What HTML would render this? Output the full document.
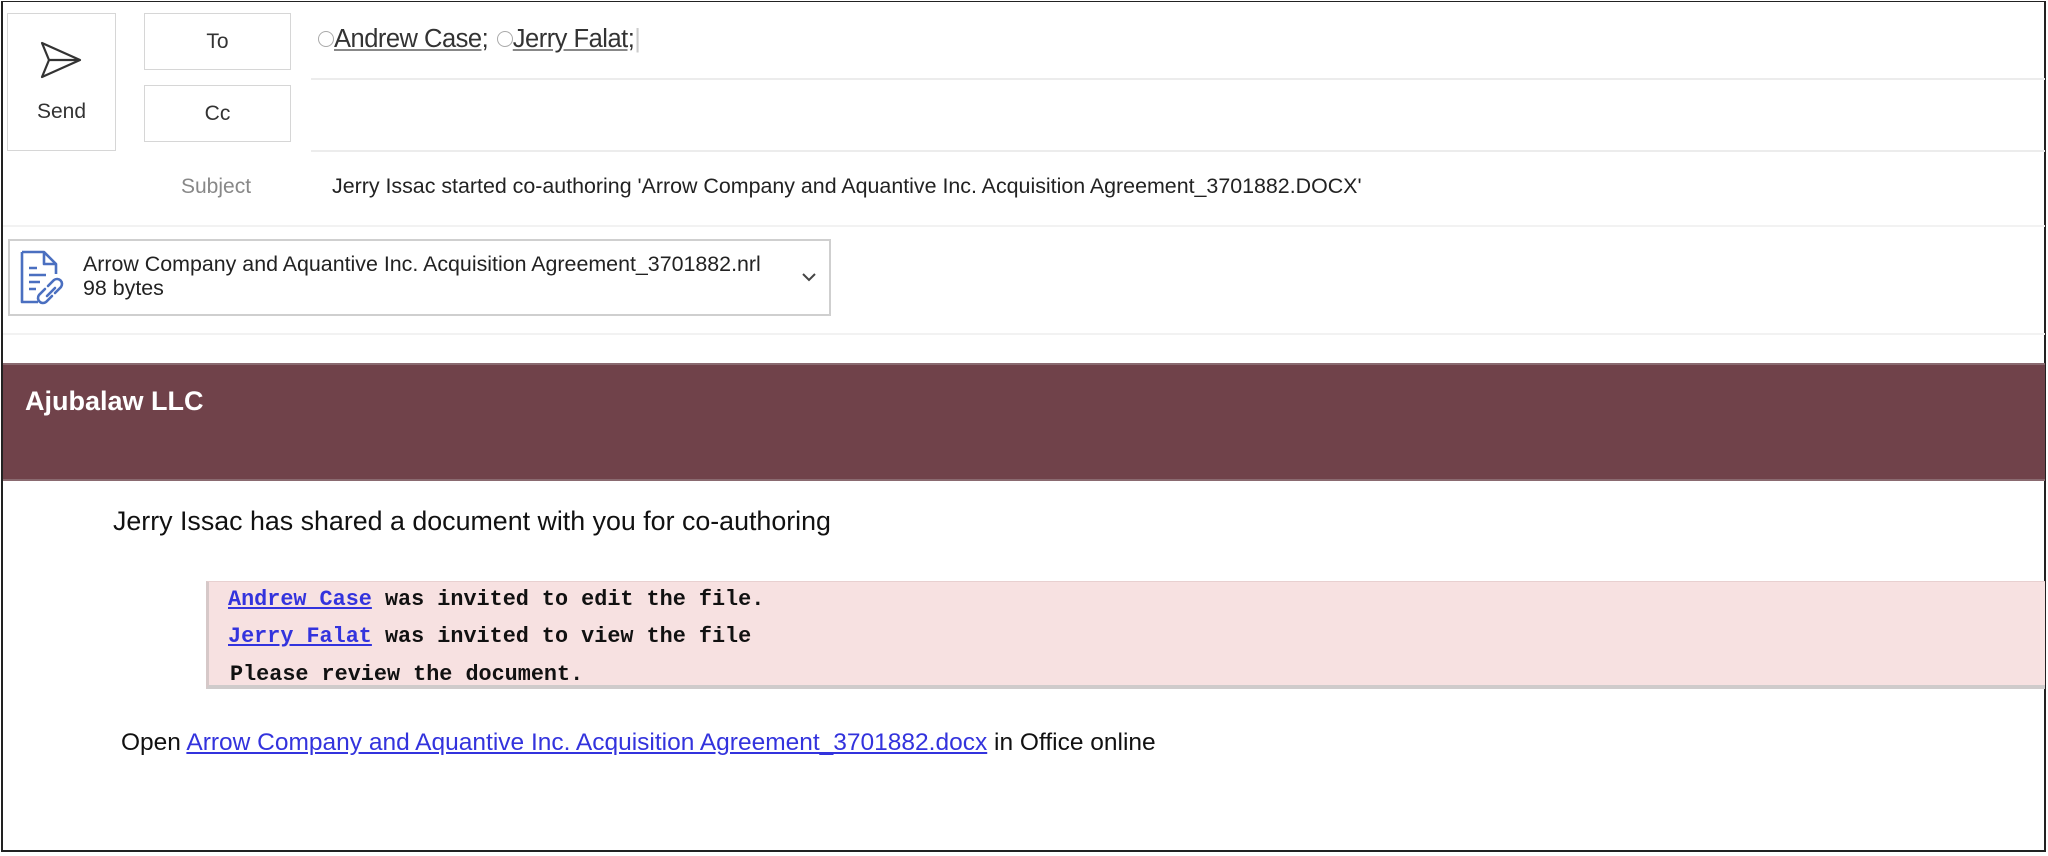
<!DOCTYPE html>
<html><head><meta charset="utf-8"><style>
*{margin:0;padding:0;box-sizing:border-box}
html,body{width:2048px;height:856px;background:#fff;overflow:hidden;font-family:"Liberation Sans",Arial,sans-serif}
.frame{position:absolute;left:1px;top:1px;width:2045px;height:851px;border:2px solid #222;border-top-width:1px}
.abs{position:absolute;white-space:nowrap}
.btn{border:1px solid #d6d6d6;background:#fff;color:#333;font-size:21px;text-align:center}
.hl{height:2px;background:#ececec;left:311px;right:3px}
.lnk{color:#3333dd;text-decoration:underline}
.mono{font-family:"Liberation Mono","Courier New",monospace;font-weight:bold;font-size:21.8px;color:#111;letter-spacing:0px}
</style></head><body>
<div class="frame"></div>

<div class="abs btn" style="left:7px;top:13px;width:109px;height:138px">
  <svg class="abs" style="left:30px;top:26px" width="46" height="40" viewBox="0 0 46 40"><path d="M4 3 L42 20 L4 37 L11 20 Z M11 20 L42 20" fill="none" stroke="#333" stroke-width="2.2" stroke-linejoin="round"/></svg>
  <div class="abs" style="left:0;right:0;top:86px">Send</div>
</div>
<div class="abs btn" style="left:144px;top:13px;width:147px;height:57px;line-height:55px">To</div>
<div class="abs btn" style="left:144px;top:85px;width:147px;height:57px;line-height:55px">Cc</div>

<div class="abs" style="left:318px;top:25px;font-size:25.5px;color:#333;letter-spacing:-0.5px">
  <span style="display:inline-block;width:16px;height:16px;border:1.5px solid #aaa;border-radius:50%;vertical-align:0px"></span><span style="text-decoration:underline;text-decoration-color:#888">Andrew Case;</span>
  <span style="display:inline-block;width:16px;height:16px;border:1.5px solid #aaa;border-radius:50%;vertical-align:0px;margin-left:2px"></span><span style="text-decoration:underline;text-decoration-color:#888">Jerry Falat;</span><span style="color:#ccc">|</span>
</div>
<div class="abs hl" style="top:78px"></div>
<div class="abs hl" style="top:150px"></div>

<div class="abs" style="left:181px;top:175px;font-size:21px;color:#888">Subject</div>
<div class="abs" style="left:332px;top:174px;font-size:21.4px;color:#222">Jerry Issac started co-authoring 'Arrow Company and Aquantive Inc. Acquisition Agreement_3701882.DOCX'</div>
<div class="abs hl" style="top:225px;left:3px;background:#f2f2f2"></div>

<div class="abs" style="left:8px;top:239px;width:823px;height:77px;border:2px solid #cfcfcf;background:#fff">
  <svg class="abs" style="left:8px;top:7px" width="50" height="60" viewBox="0 0 50 60">
    <path d="M4 4 H26 L38 16 V26 M26 4 V16 H38 M4 4 V54 H20" fill="none" stroke="#4a6fc0" stroke-width="2.6" stroke-linejoin="round"/>
    <path d="M11 20 H19 M11 27 H28 M11 34 H22 M11 41 H18" stroke="#4a6fc0" stroke-width="2.6"/>
    <path d="M30 38 l6 -6 a5 5 0 0 1 7 7 l-6 6 M34 48 l-6 6 a5 5 0 0 1 -7 -7 l6 -6 M29 48 l8 -8" fill="none" stroke="#4a6fc0" stroke-width="2.6" stroke-linecap="round"/>
  </svg>
  <div class="abs" style="left:73px;top:11px;font-size:21.4px;color:#222;line-height:24px">Arrow Company and Aquantive Inc. Acquisition Agreement_3701882.nrl<br>98 bytes</div>
  <svg class="abs" style="left:791px;top:30px" width="16" height="12" viewBox="0 0 16 12"><path d="M2 3 L8 9 L14 3" fill="none" stroke="#444" stroke-width="2"/></svg>
</div>
<div class="abs hl" style="top:333px;left:3px;background:#f2f2f2"></div>

<div class="abs" style="left:3px;right:3px;top:363px;height:118px;background:#70424a;border-top:2px solid #8a6a70;border-bottom:2px solid #8a6a70"></div>
<div class="abs" style="left:25px;top:386px;font-size:27px;font-weight:bold;color:#fff;letter-spacing:0px">Ajubalaw LLC</div>

<div class="abs" style="left:113px;top:506px;font-size:26.8px;color:#111">Jerry Issac has shared a document with you for co-authoring</div>

<div class="abs" style="left:206px;right:3px;top:581px;height:108px;background:#f7e1e1;border-left:3px solid #d6c8c8;border-top:1px solid #e8d0d0;border-bottom:4px solid #cfcbcb"></div>
<div class="abs mono" style="left:228px;top:587px"><span class="lnk">Andrew Case</span> was invited to edit the file.</div>
<div class="abs mono" style="left:228px;top:624px"><span class="lnk">Jerry Falat</span> was invited to view the file</div>
<div class="abs mono" style="left:230px;top:662px">Please review the document.</div>

<div class="abs" style="left:121px;top:729px;font-size:24.5px;color:#111">Open <span class="lnk">Arrow Company and Aquantive Inc. Acquisition Agreement_3701882.docx</span> in Office online</div>
</body></html>
